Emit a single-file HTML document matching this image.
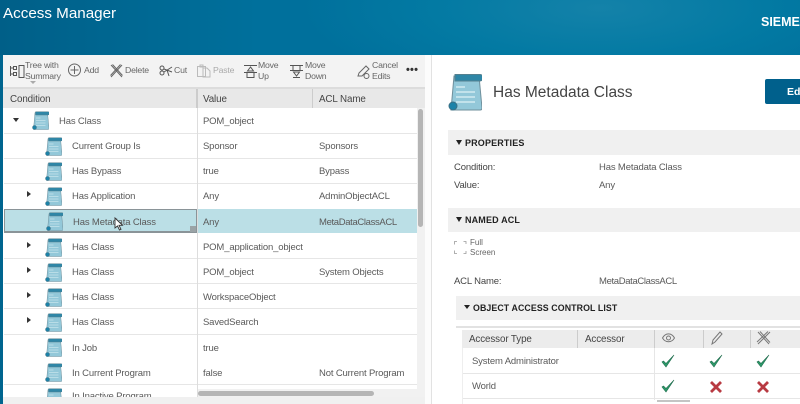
<!DOCTYPE html>
<html><head><meta charset="utf-8"><style>
html,body{margin:0;padding:0;width:800px;height:404px;overflow:hidden;background:#fff}
body{position:relative;font-family:"Liberation Sans","DejaVu Sans",sans-serif;font-size:9.500px;letter-spacing:-.15px;color:#5a5a5a}
.a{position:absolute}
.t{position:absolute;white-space:nowrap;line-height:12px;margin-top:1px}
.c{margin-top:2px}
.r{position:absolute;left:4px;width:413px;height:1px;background:#e6e6e6}
.b{font-weight:bold;color:#222;font-size:9px;letter-spacing:.15px}
.h{font-size:9.800px;color:#444;letter-spacing:-.1px}
.tb{font-size:8.700px;color:#666;line-height:11px;letter-spacing:-.2px;margin-top:0}
svg{position:absolute;overflow:visible}
</style></head><body>
<svg width="0" height="0" style="position:absolute"><defs>
<symbol id="s" viewBox="0 0 34 38">
<path d="M6 3h25l3 32q0 2-2 2H3z" fill="#93c8d9" stroke="#6f8f9b" stroke-width="1"/>
<path d="M7 1.500h25a3.200 3.200 0 0 1 0 6.500H7z" fill="#2f86a6" stroke="#54808f" stroke-width="1"/>
<circle cx="5" cy="33" r="4" fill="#1c82a8" stroke="#3c7085" stroke-width="1"/>
<path d="M8 14h9M8 19h19M8 24h19M8 29h19" stroke="#dff1f6" stroke-width="1.200" fill="none"/>
</symbol>
<symbol id="ck" viewBox="0 0 14 14"><path d="M1 8l4 5 8-12-8 8.500-2.500-2.500z" fill="#2d9a6a" stroke="#1d6b4b" stroke-width=".6"/></symbol>
<symbol id="xx" viewBox="0 0 12 12"><path d="M1 1l10 10M11 1L1 11" stroke="#b83a42" stroke-width="2.800" fill="none"/></symbol>
</defs></svg>

<div class="a" style="left:0;top:0;width:800px;height:55px;background:radial-gradient(ellipse 300px 90px at 600px 8px,#1482a9,#037aa3 55%,#00709c)"></div>
<div class="a" style="left:0;top:0;width:260px;height:55px;background:linear-gradient(90deg,#005f88,rgba(0,112,156,0))"></div>
<div class="t" style="left:3px;top:4px;font-size:15.200px;line-height:18px;color:#fff;letter-spacing:0">Access Manager</div>
<div class="t" style="left:761px;top:14px;font-size:12.500px;line-height:14px;color:#fff;font-weight:bold;letter-spacing:0">SIEMENS</div>

<div class="a" style="left:0;top:55px;width:3px;height:349px;background:#00658f"></div>
<div class="a" style="left:3px;top:55px;width:422px;height:349px;background:#fff"></div>
<div class="a" style="left:3px;top:397px;width:422px;height:7px;background:#f0f0f0"></div>
<div class="a" style="left:425px;top:55px;width:6px;height:349px;background:#fcfcfc"></div>
<div class="a" style="left:431px;top:55px;width:1px;height:349px;background:#e2e2e2"></div>

<!-- toolbar -->
<div class="a" style="left:3px;top:55px;width:422px;height:32px;background:#f3f3f3"></div>
<div class="a" style="left:3px;top:87px;width:422px;height:2px;background:#dcdcdc"></div>
<svg style="left:9px;top:65px" width="16" height="14" fill="none" stroke="#555" stroke-width="1"><path d="M1.500 1v10M1.500 3H4M1.500 9H4M4.500 1.500h3v3h-3zM4.500 7.500h3v3h-3z"/><rect x="10" y=".5" width="5" height="12"/></svg>
<div class="t tb" style="left:25px;top:60px">Tree with<br>Summary</div>
<div class="a" style="left:30px;top:81px;width:0;height:0;border:3px solid transparent;border-top-color:#aaa"></div>
<svg style="left:68px;top:63px" width="14" height="14" fill="none" stroke="#666"><circle cx="6.500" cy="7" r="6"/><path d="M6.500 3v8M2.500 7h8"/></svg>
<div class="t tb" style="left:84px;top:65px">Add</div>
<svg style="left:110px;top:64px" width="13" height="14" fill="none" stroke="#666"><path d="M1 1l11 12M12 1L1 13M2.500 0.500l10 11M10.500.5l-10 11"/></svg>
<div class="t tb" style="left:125px;top:65px">Delete</div>
<svg style="left:159px;top:64px" width="14" height="13" fill="none" stroke="#555"><circle cx="3" cy="4" r="2"/><circle cx="3" cy="9" r="2"/><path d="M5 5l8 3M5 8l8-5M8 6l2 6"/></svg>
<div class="t tb" style="left:174px;top:65px">Cut</div>
<svg style="left:197px;top:64px" width="14" height="14" fill="none" stroke="#bbb"><rect x=".5" y="2.500" width="8" height="10"/><path d="M6 4h4l3 3v6H6zM3 1h3v2H3z"/></svg>
<div class="t tb" style="left:213px;top:65px;color:#aaa">Paste</div>
<svg style="left:243px;top:64px" width="15" height="15" fill="none" stroke="#555"><path d="M1 1.500h13M4 13.500h7v-5H4zM1 8.500h13M7.500 3l-3 4h6z"/></svg>
<div class="t tb" style="left:258px;top:60px">Move<br>Up</div>
<svg style="left:289px;top:64px" width="15" height="15" fill="none" stroke="#555"><path d="M1 1.500h13M4 1.500h7v5H4zM1 6.500h13M7.500 12l-3-4h6zM4 13.500h7"/></svg>
<div class="t tb" style="left:305px;top:60px">Move<br>Down</div>
<svg style="left:357px;top:65px" width="15" height="14" fill="none" stroke="#666"><path d="M1 11l1-3 7-7 3 3-7 7zM7 11a2.500 2.500 0 1 0 5 0 2.500 2.500 0 1 0-5 0z"/></svg>
<div class="t tb" style="left:372px;top:60px">Cancel<br>Edits</div>
<div class="t" style="left:406px;top:63px;font-size:11px;color:#333;font-weight:bold;letter-spacing:.2px">•••</div>

<!-- table head -->
<div class="a" style="left:3px;top:89px;width:422px;height:19px;background:#e8e8e8"></div>
<div class="a" style="left:196px;top:89px;width:2px;height:19px;background:#ccc"></div>
<div class="a" style="left:312px;top:89px;width:1px;height:19px;background:#ccc"></div>
<div class="t h" style="left:10px;top:93px">Condition</div>
<div class="t h" style="left:203px;top:93px">Value</div>
<div class="t h" style="left:319px;top:93px">ACL Name</div>

<!-- row separators -->
<div class="r" style="top:133px"></div><div class="r" style="top:158px"></div><div class="r" style="top:183px"></div>
<div class="r" style="top:258px"></div><div class="r" style="top:283px"></div><div class="r" style="top:308px"></div><div class="r" style="top:334px"></div><div class="r" style="top:384px"></div>
<!-- selection -->
<div class="a" style="left:4px;top:209px;width:413px;height:24px;background:#bbdfe6"></div>
<div class="a" style="left:4px;top:209px;width:191px;height:21px;border:1px solid #8a9498;border-bottom-width:2px"></div>
<div class="a" style="left:190px;top:226px;width:6px;height:6px;background:#9aa3a6"></div>
<div class="a" style="left:197px;top:108px;width:1px;height:289px;background:#ddd"></div>

<!-- arrows -->
<div class="a" style="left:13px;top:118px;width:0;height:0;border:3.500px solid transparent;border-top:4px solid #333"></div>
<div class="a" style="left:27px;top:191px;width:0;height:0;border:3.500px solid transparent;border-left:4px solid #333"></div>
<div class="a" style="left:27px;top:242px;width:0;height:0;border:3.500px solid transparent;border-left:4px solid #333"></div>
<div class="a" style="left:27px;top:267px;width:0;height:0;border:3.500px solid transparent;border-left:4px solid #333"></div>
<div class="a" style="left:27px;top:292px;width:0;height:0;border:3.500px solid transparent;border-left:4px solid #333"></div>
<div class="a" style="left:27px;top:317px;width:0;height:0;border:3.500px solid transparent;border-left:4px solid #333"></div>

<!-- icons -->
<svg style="left:32px;top:111px" width="17" height="19"><use href="#s" width="17" height="19"/></svg>
<svg style="left:45px;top:137px" width="17" height="19"><use href="#s" width="17" height="19"/></svg>
<svg style="left:45px;top:162px" width="17" height="19"><use href="#s" width="17" height="19"/></svg>
<svg style="left:45px;top:187px" width="17" height="19"><use href="#s" width="17" height="19"/></svg>
<svg style="left:46px;top:212px" width="17" height="19"><use href="#s" width="17" height="19"/></svg>
<svg style="left:45px;top:238px" width="17" height="19"><use href="#s" width="17" height="19"/></svg>
<svg style="left:45px;top:263px" width="17" height="19"><use href="#s" width="17" height="19"/></svg>
<svg style="left:45px;top:288px" width="17" height="19"><use href="#s" width="17" height="19"/></svg>
<svg style="left:45px;top:313px" width="17" height="19"><use href="#s" width="17" height="19"/></svg>
<svg style="left:45px;top:338px" width="17" height="19"><use href="#s" width="17" height="19"/></svg>
<svg style="left:45px;top:363px" width="17" height="19"><use href="#s" width="17" height="19"/></svg>
<div class="a" style="left:45px;top:388px;width:18px;height:9px;overflow:hidden"><svg style="left:0;top:0" width="17" height="19"><use href="#s" width="17" height="19"/></svg></div>

<!-- cells -->
<div class="t c" style="left:59px;top:114px">Has Class</div><div class="t c" style="left:203px;top:114px">POM_object</div>
<div class="t c" style="left:72px;top:139px">Current Group Is</div><div class="t c" style="left:203px;top:139px">Sponsor</div><div class="t c" style="left:319px;top:139px">Sponsors</div>
<div class="t c" style="left:72px;top:164px">Has Bypass</div><div class="t c" style="left:203px;top:164px">true</div><div class="t c" style="left:319px;top:164px">Bypass</div>
<div class="t c" style="left:72px;top:189px">Has Application</div><div class="t c" style="left:203px;top:189px">Any</div><div class="t c" style="left:319px;top:189px">AdminObjectACL</div>
<div class="t c" style="left:73px;top:215px">Has Metadata Class</div><div class="t c" style="left:203px;top:215px">Any</div><div class="t c" style="left:319px;top:215px;letter-spacing:-.35px">MetaDataClassACL</div>
<div class="t c" style="left:72px;top:240px">Has Class</div><div class="t c" style="left:203px;top:240px">POM_application_object</div>
<div class="t c" style="left:72px;top:265px">Has Class</div><div class="t c" style="left:203px;top:265px">POM_object</div><div class="t c" style="left:319px;top:265px">System Objects</div>
<div class="t c" style="left:72px;top:290px">Has Class</div><div class="t c" style="left:203px;top:290px">WorkspaceObject</div>
<div class="t c" style="left:72px;top:315px">Has Class</div><div class="t c" style="left:203px;top:315px">SavedSearch</div>
<div class="t c" style="left:72px;top:341px">In Job</div><div class="t c" style="left:203px;top:341px">true</div>
<div class="t c" style="left:72px;top:366px">In Current Program</div><div class="t c" style="left:203px;top:366px">false</div><div class="t c" style="left:319px;top:366px">Not Current Program</div>
<div class="a" style="left:4px;top:390px;width:192px;height:7px;overflow:hidden"><div class="t" style="left:68px;top:0">In Inactive Program</div></div>

<!-- cursor -->
<svg style="left:114px;top:217px" width="10" height="14"><path d="M1 1v10l2.500-2 2 4 1.500-.7-2-4h3.500z" fill="#fff" stroke="#333" stroke-width=".9"/></svg>

<!-- scrollbars -->
<div class="a" style="left:417px;top:108px;width:8px;height:289px;background:#f1f1f1"></div>
<div class="a" style="left:418px;top:109px;width:5px;height:118px;background:#b5b5b5;border-radius:3px"></div>
<div class="a" style="left:198px;top:389px;width:219px;height:8px;background:#f1f1f1"></div>
<div class="a" style="left:198px;top:391px;width:176px;height:5px;background:#b5b5b5;border-radius:3px"></div>

<!-- right panel -->
<svg style="left:448px;top:73px" width="34" height="38"><use href="#s" width="34" height="38"/></svg>
<div class="t" style="left:493px;top:83px;font-size:15.500px;line-height:18px;color:#444;letter-spacing:0">Has Metadata Class</div>
<div class="a" style="left:765px;top:79px;width:35px;height:25px;background:#00608c;border-radius:2px 0 0 2px"></div>
<div class="t" style="left:787px;top:85px;font-size:10.500px;color:#fff;font-weight:bold;letter-spacing:0">Edit</div>

<div class="a" style="left:448px;top:130px;width:352px;height:25px;background:#f0f0f0"></div>
<div class="a" style="left:456px;top:140px;width:0;height:0;border:3.500px solid transparent;border-top:5px solid #222"></div>
<div class="t b" style="left:465px;top:136px">PROPERTIES</div>
<div class="t" style="left:454px;top:161px;color:#444">Condition:</div>
<div class="t" style="left:599px;top:161px">Has Metadata Class</div>
<div class="t" style="left:454px;top:179px;color:#444">Value:</div>
<div class="t" style="left:599px;top:179px">Any</div>

<div class="a" style="left:448px;top:208px;width:352px;height:24px;background:#f0f0f0"></div>
<div class="a" style="left:456px;top:217px;width:0;height:0;border:3.500px solid transparent;border-top:5px solid #222"></div>
<div class="t b" style="left:465px;top:213px">NAMED ACL</div>
<svg style="left:454px;top:241px" width="14" height="14" fill="none" stroke="#999" stroke-width=".8"><path d="M.5 3.500V.5H3M9.500.5h2.500V3M.5 9.500v3H3M9.500 12.500h2.500V10"/></svg>
<div class="t" style="left:470px;top:237px;font-size:8px;line-height:10px;color:#666;letter-spacing:0">Full<br>Screen</div>
<div class="t" style="left:454px;top:275px;color:#444">ACL Name:</div>
<div class="t" style="left:599px;top:275px;letter-spacing:-.35px">MetaDataClassACL</div>

<div class="a" style="left:456px;top:296px;width:344px;height:24px;background:#f0f0f0"></div>
<div class="a" style="left:464px;top:305px;width:0;height:0;border:3px solid transparent;border-top:4.500px solid #222"></div>
<div class="t b" style="left:473px;top:301px;font-size:8.800px;letter-spacing:.1px">OBJECT ACCESS CONTROL LIST</div>

<div class="a" style="left:456px;top:326px;width:344px;height:2px;background:#e2e2e2"></div>
<div class="a" style="left:462px;top:330px;width:338px;height:18px;background:#ececec"></div>
<div class="a" style="left:577px;top:330px;width:1px;height:18px;background:#ccc"></div>
<div class="a" style="left:654px;top:330px;width:1px;height:18px;background:#ccc"></div>
<div class="a" style="left:703px;top:330px;width:1px;height:18px;background:#ccc"></div>
<div class="a" style="left:750px;top:330px;width:1px;height:18px;background:#ccc"></div>
<div class="t h" style="left:469px;top:333px">Accessor Type</div>
<div class="t h" style="left:585px;top:333px">Accessor</div>
<svg style="left:662px;top:333px" width="13" height="10" fill="none" stroke="#777"><path d="M.5 5c3-5.500 9-5.500 12 0-3 5-9 5-12 0z"/><circle cx="6.500" cy="5" r="2"/></svg>
<svg style="left:711px;top:331px" width="12" height="14" fill="none" stroke="#777"><path d="M1 13l1-4 7-8 2 2-7 8z"/></svg>
<svg style="left:757px;top:331px" width="14" height="14" fill="none" stroke="#777"><path d="M1 1l11 12M13 1L1 13M3 .5l10 11M11 .5L0 11"/></svg>

<div class="a" style="left:462px;top:373px;width:338px;height:1px;background:#e6e6e6"></div>
<div class="a" style="left:462px;top:398px;width:338px;height:1px;background:#e6e6e6"></div>
<div class="a" style="left:654px;top:348px;width:1px;height:52px;background:#e6e6e6"></div>
<div class="a" style="left:462px;top:348px;width:1px;height:56px;background:#eee"></div>
<div class="t" style="left:472px;top:355px">System Administrator</div>
<div class="t" style="left:472px;top:380px">World</div>
<svg style="left:661px;top:354px" width="14" height="14"><use href="#ck" width="14" height="14"/></svg>
<svg style="left:709px;top:354px" width="14" height="14"><use href="#ck" width="14" height="14"/></svg>
<svg style="left:756px;top:354px" width="14" height="14"><use href="#ck" width="14" height="14"/></svg>
<svg style="left:661px;top:379px" width="14" height="14"><use href="#ck" width="14" height="14"/></svg>
<svg style="left:710px;top:381px" width="12" height="12"><use href="#xx" width="12" height="12"/></svg>
<svg style="left:757px;top:381px" width="12" height="12"><use href="#xx" width="12" height="12"/></svg>
<div class="a" style="left:657px;top:400px;width:33px;height:2px;background:#c4c4c4"></div>
</body></html>
